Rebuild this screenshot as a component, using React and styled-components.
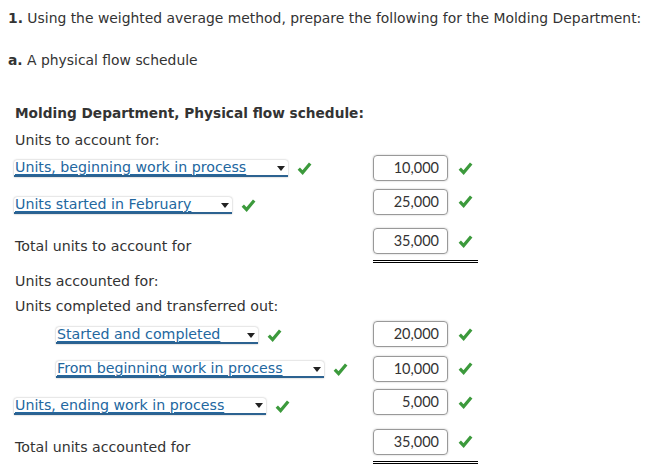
import React from 'react'
import styled, { createGlobalStyle } from 'styled-components'

const GlobalStyle = createGlobalStyle`
  body {
    margin: 0;
    background: #fff;
    font-family: "DejaVu Sans", Verdana, sans-serif;
    color: #333;
  }
`

const Container = styled.div`
  width: 667px;
  height: 474px;
  overflow: hidden;
`
const Question = styled.div`
  font-family: "DejaVu Sans", Verdana, sans-serif;
  font-size: 13.9px;
  color: #333;
  padding-left: 8px;
  height: ${p => p.$h}px;
  line-height: ${p => p.$lh}px;
  white-space: nowrap;
  b { font-weight: bold; }
`
const Schedule = styled.div`
  padding-left: 15px;
  font-size: 14.2px;
  color: #333;
`
const Heading = styled.div`
  font-weight: bold;
  font-size: 13.7px;
  height: 25px;
  line-height: 24px;
`
const Plain = styled.div`
  height: ${p => p.$h || 26}px;
  line-height: ${p => p.$lh || 26}px;
`
const Row = styled.div`
  display: flex;
  align-items: stretch;
  height: ${p => p.$h}px;
`
const Left = styled.div`
  width: 358px;
  display: flex;
  align-items: center;
  padding-left: ${p => p.$indent || 0}px;
  padding-top: ${p => p.$shift || 0}px;
  box-sizing: border-box;
`
const Label = styled.span`
  padding-top: ${p => p.$shift || 0}px;
`
const Right = styled.div`
  width: 105px;
  display: flex;
  align-items: center;
  gap: 10px;
  border-bottom: ${p =>
    p.$line === 'single' ? '1px solid #000' : p.$line === 'double' ? '3px double #000' : 'none'};
  box-sizing: border-box;
  padding-bottom: ${p => p.$pb || 0}px;
`
const Select = styled.div`
  display: flex;
  align-items: center;
  justify-content: space-between;
  width: ${p => p.$w}px;
  height: 17px;
  box-sizing: border-box;
  margin-left: -1px;
  padding: 0 3px 0 1px;
  background: #fff;
  border-radius: 3px 3px 0 0;
  box-shadow: 0 0 2px rgba(0, 0, 0, 0.35);
  border-bottom: 2px solid #2c6290;
  color: #23679f;
  font-size: 14.2px;
  line-height: 15px;
  text-decoration: underline;
  text-underline-offset: 2px;
  white-space: nowrap;
`
const Arrow = styled.span`
  width: 0;
  height: 0;
  border-left: 4px solid transparent;
  border-right: 4px solid transparent;
  border-top: 5px solid #222;
  margin-top: 1px;
`
const Input = styled.div`
  width: 75px;
  height: 26px;
  box-sizing: border-box;
  border: 1px solid #999;
  border-radius: 4px;
  box-shadow: 0 0 2px rgba(0, 0, 0, 0.25);
  font-family: Lato, "Liberation Sans", sans-serif;
  font-size: 14.5px;
  color: #333;
  text-align: right;
  padding-right: 8px;
  line-height: 24px;
`

function Check() {
  return (
    <svg width="15" height="15" viewBox="0 0 15 15" style={{ flexShrink: 0 }}>
      <polyline
        points="1.8,7.6 5.6,11.6 13.2,2.4"
        fill="none"
        stroke="#3c9a3c"
        strokeWidth="3.2"
      />
    </svg>
  )
}

function Dropdown({ width, children }) {
  return (
    <>
      <Select $w={width}>
        <span>{children}</span>
        <Arrow />
      </Select>
      <span style={{ width: 9 }} />
      <Check />
    </>
  )
}

export default function App() {
  return (
    <Container>
      <GlobalStyle />
      <Question $h={37} $lh={37}>
        <b>1.</b> Using the weighted average method, prepare the following for the Molding Department:
      </Question>
      <Question $h={64} $lh={46}>
        <b>a.</b> A physical flow schedule
      </Question>
      <Schedule>
        <Heading>Molding Department, Physical flow schedule:</Heading>
        <Plain $h={25} $lh={28}>Units to account for:</Plain>

        <Row $h={34}>
          <Left $shift={1}>
            <Dropdown width={274}>Units, beginning work in process</Dropdown>
          </Left>
          <Right>
            <Input>10,000</Input>
            <Check />
          </Right>
        </Row>
        <Row $h={37}>
          <Left $shift={4}>
            <Dropdown width={218}>Units started in February</Dropdown>
          </Left>
          <Right $pb={4}>
            <Input>25,000</Input>
            <Check />
          </Right>
        </Row>
        <Row $h={41}>
          <Left>
            <Label $shift={7}>Total units to account for</Label>
          </Left>
          <Right $line="double" $pb={0}>
            <Input>35,000</Input>
            <Check />
          </Right>
        </Row>

        <Plain $h={30} $lh={36}>Units accounted for:</Plain>
        <Plain $h={24} $lh={26}>Units completed and transferred out:</Plain>

        <Row $h={34}>
          <Left $indent={42} $shift={3}>
            <Dropdown width={202}>Started and completed</Dropdown>
          </Left>
          <Right $pb={-1}>
            <Input>20,000</Input>
            <Check />
          </Right>
        </Row>
        <Row $h={35}>
          <Left $indent={42} $shift={2}>
            <Dropdown width={268}>From beginning work in process</Dropdown>
          </Left>
          <Right>
            <Input>10,000</Input>
            <Check />
          </Right>
        </Row>
        <Row $h={36}>
          <Left $shift={4}>
            <Dropdown width={252}>Units, ending work in process</Dropdown>
          </Left>
          <Right $pb={4}>
            <Input>5,000</Input>
            <Check />
          </Right>
        </Row>
        <Row $h={42}>
          <Left>
            <Label $shift={7}>Total units accounted for</Label>
          </Left>
          <Right $line="double">
            <Input>35,000</Input>
            <Check />
          </Right>
        </Row>
      </Schedule>
    </Container>
  )
}
